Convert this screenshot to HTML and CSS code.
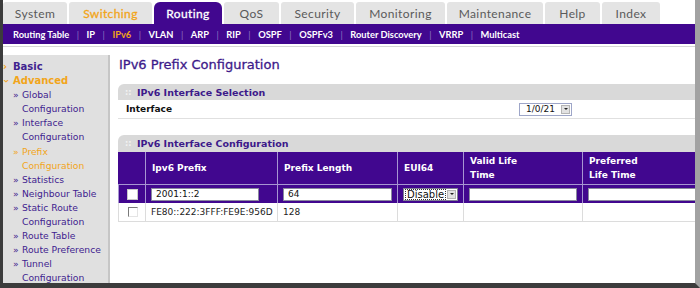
FILE: index.html
```html
<!DOCTYPE html>
<html>
<head>
<meta charset="utf-8">
<link rel="stylesheet" href="styles.css">
</head>
<body>
<div class="frame">
  <div class="tabs">
    <div class="tab">System</div>
    <div class="tab tab-warm">Switching</div>
    <div class="tab tab-on">Routing</div>
    <div class="tab">QoS</div>
    <div class="tab">Security</div>
    <div class="tab">Monitoring</div>
    <div class="tab">Maintenance</div>
    <div class="tab">Help</div>
    <div class="tab">Index</div>
  </div>
  <div class="subnav">
    <span>Routing Table</span><span class="sep">|</span>
    <span>IP</span><span class="sep">|</span>
    <span class="sub-on">IPv6</span><span class="sep">|</span>
    <span>VLAN</span><span class="sep">|</span>
    <span>ARP</span><span class="sep">|</span>
    <span>RIP</span><span class="sep">|</span>
    <span>OSPF</span><span class="sep">|</span>
    <span>OSPFv3</span><span class="sep">|</span>
    <span>Router Discovery</span><span class="sep">|</span>
    <span>VRRP</span><span class="sep">|</span>
    <span>Multicast</span>
  </div>
  <div class="rule"></div>
  <div class="body">
    <aside class="side">
      <div class="cat"><span class="arrow">›</span>Basic</div>
      <div class="cat cat-on"><span class="arrow arrow-down">›</span>Advanced</div>
      <div class="item"><span class="bullet">»</span>Global Configuration</div>
      <div class="item"><span class="bullet">»</span>Interface Configuration</div>
      <div class="item item-on"><span class="bullet">»</span>Prefix Configuration</div>
      <div class="item"><span class="bullet">»</span>Statistics</div>
      <div class="item"><span class="bullet">»</span>Neighbour Table</div>
      <div class="item"><span class="bullet">»</span>Static Route Configuration</div>
      <div class="item"><span class="bullet">»</span>Route Table</div>
      <div class="item"><span class="bullet">»</span>Route Preference</div>
      <div class="item"><span class="bullet">»</span>Tunnel Configuration</div>
    </aside>
    <main class="main">
      <h1 class="title">IPv6 Prefix Configuration</h1>

      <section class="sec">
        <div class="sec-head"><span class="grip">::</span>IPv6 Interface Selection</div>
        <div class="sel-row">
          <div class="sel-label">Interface</div>
          <div class="sel-value">
            <span class="select select-if"><span class="select-text">1/0/21</span><span class="select-btn"><span class="tri"></span></span></span>
          </div>
        </div>
      </section>

      <section class="sec sec-gap">
        <div class="sec-head"><span class="grip">::</span>IPv6 Interface Configuration</div>
        <div class="grid">
          <div class="hc hc-first"></div>
          <div class="hc">Ipv6 Prefix</div>
          <div class="hc">Prefix Length</div>
          <div class="hc">EUI64</div>
          <div class="hc">Valid Life<br>Time</div>
          <div class="hc">Preferred<br>Life Time</div>

          <div class="ec ec-first"><span class="box box-edit"></span></div>
          <div class="ec"><span class="field field-w1">2001:1::2</span></div>
          <div class="ec"><span class="field field-w2">64</span></div>
          <div class="ec"><span class="select select-eui"><span class="select-text select-focus">Disable</span><span class="select-btn"><span class="tri"></span></span></span></div>
          <div class="ec"><span class="field field-w1"></span></div>
          <div class="ec"><span class="field field-w3"></span></div>

          <div class="dc dc-first"><span class="box box-row"></span></div>
          <div class="dc">FE80::222:3FFF:FE9E:956D</div>
          <div class="dc">128</div>
          <div class="dc"></div>
          <div class="dc"></div>
          <div class="dc"></div>
        </div>
      </section>
    </main>
  </div>
</div>
</body>
</html>
```

FILE: styles.css
```css
html, body {
  margin: 0;
  padding: 0;
  background: #ffffff;
}

.frame {
  width: 700px;
  height: 288px;
  box-sizing: border-box;
  border-left: 3px solid #3c3c3c;
  border-right: 5px solid #a2a2a2;
  border-bottom: 5px solid #3c3c3c;
  overflow: hidden;
  background: #ffffff;
  font-family: "DejaVu Sans", Verdana, sans-serif;
}

/* top tabs */
.tabs {
  display: grid;
  grid-template-columns: 64px 83px 68px 55px 73px 89px 96px 55px 58px;
  column-gap: 2px;
  height: 22px;
  padding-top: 2px;
  font-family: Lato, "Open Sans", sans-serif;
  font-size: 12px;
}

.tab {
  display: flex;
  align-items: center;
  justify-content: center;
  background: #e4e4e4;
  color: #5a5a5a;
  border-radius: 3px 3px 0 0;
  letter-spacing: 0.4px;
}

.tab-warm {
  color: #f2a51a;
  -webkit-text-stroke: 0.3px #f2a51a;
}

.tab-on {
  background: #41078f;
  color: #ffffff;
  border-radius: 6px 6px 0 0;
  -webkit-text-stroke: 0.3px #ffffff;
}

/* sub navigation */
.subnav {
  height: 20px;
  background: #41078f;
  display: flex;
  align-items: center;
  padding-left: 10px;
  font-family: Lato, "Open Sans", sans-serif;
  font-weight: bold;
  font-size: 9.3px;
  color: #ffffff;
  white-space: nowrap;
}

.sep {
  color: #8d77c2;
  font-weight: normal;
  padding: 0 7.5px;
}

.sub-on {
  color: #f2a51a;
}

.rule {
  height: 1px;
  margin-top: 2px;
  background: #d6d6d6;
}

/* body */
.body {
  display: flex;
  margin-top: 8px;
  height: 228px;
}

.side {
  flex: none;
  width: 105px;
  background: #e0e0e0;
  border-right: 2px solid #c6c6c6;
  padding-top: 5px;
  font-size: 9.2px;
  line-height: 14.1px;
  color: #40238f;
}

.cat {
  font-weight: bold;
  font-size: 10px;
  padding-left: 10px;
  position: relative;
}

.cat-on {
  color: #f2a51a;
}

.arrow {
  position: absolute;
  left: 0;
  top: 0;
  color: #f2a51a;
  font-weight: bold;
}

.arrow-down {
  transform: rotate(90deg);
  left: 1px;
}

.item {
  padding-left: 19px;
  text-indent: -9px;
}

.bullet {
  display: inline-block;
  width: 9px;
  text-indent: 0;
}

.item-on {
  color: #f2a51a;
}

.main {
  flex: none;
  width: 620px;
  padding-left: 8px;
}

.title {
  margin: 2px 0 11px 1px;
  font-size: 13px;
  line-height: 16px;
  font-weight: normal;
  color: #3d1a8a;
  -webkit-text-stroke: 0.3px #3d1a8a;
}

.sec-gap {
  margin-top: 16px;
}

.sec-head {
  height: 16px;
  display: flex;
  align-items: center;
  background: #d9d9d9;
  border-radius: 6px 0 0 0;
  padding-left: 7px;
  font-weight: bold;
  font-size: 9.5px;
  color: #3d1a8a;
}

.sec-gap .sec-head {
  height: 17px;
}

.grip {
  color: #f2f2f2;
  width: 12px;
  font-size: 8px;
}

.sel-row {
  display: grid;
  grid-template-columns: 393px 1fr;
  height: 18px;
  align-items: center;
  border-bottom: 1px solid #e0e0e0;
}

.sel-label {
  padding-left: 8px;
  font-weight: bold;
  font-size: 9px;
  color: #111111;
}

.sel-value {
  padding-left: 8px;
  display: flex;
}

/* select widgets */
.select {
  display: inline-flex;
  align-items: center;
  box-sizing: border-box;
  height: 13px;
  background: #ffffff;
  border: 1px solid #9ea6c8;
  font-size: 9px;
  color: #111111;
}

.select-if {
  width: 53px;
}

.select-eui {
  width: 55px;
  border-color: #7f8092;
  font-size: 10px;
}

.select-text {
  padding-left: 6px;
  line-height: 11px;
}

.select-eui .select-text {
  padding-left: 2px;
}

.select-focus {
  outline: 1px dotted #333;
  outline-offset: -1px;
  padding: 0 2px;
  margin-left: 1px;
}

.select-btn {
  margin-left: auto;
  margin-right: 1px;
  width: 9px;
  height: 9px;
  box-sizing: border-box;
  background: #e2e2e2;
  border: 1px solid #b4b4b4;
  display: flex;
  align-items: center;
  justify-content: center;
}

.tri {
  width: 0;
  height: 0;
  border-left: 2px solid transparent;
  border-right: 2px solid transparent;
  border-top: 2px solid #222;
}

/* config table */
.grid {
  display: grid;
  grid-template-columns: 27px 132px 120px 66px 119px 160px;
}

.hc {
  height: 33px;
  box-sizing: border-box;
  background: #41078f;
  border-left: 1px solid #a796d2;
  border-bottom: 1px solid #a796d2;
  color: #ffffff;
  font-weight: bold;
  font-size: 9px;
  line-height: 14px;
  padding-left: 6px;
  display: flex;
  align-items: center;
}

.hc-first,
.ec-first,
.dc-first {
  border-left: none;
}

.ec {
  height: 18px;
  box-sizing: border-box;
  background: #41078f;
  border-left: 1px solid #a796d2;
  padding-left: 5px;
  display: flex;
  align-items: center;
}

.ec-first {
  padding-left: 8px;
}

.dc {
  height: 19px;
  box-sizing: border-box;
  border-left: 1px solid #dcdcdc;
  border-bottom: 1px solid #dcdcdc;
  padding-left: 5px;
  display: flex;
  align-items: center;
  font-size: 9px;
  color: #222222;
  white-space: nowrap;
}

.dc-first {
  padding-left: 9px;
}

.field {
  display: block;
  box-sizing: border-box;
  height: 13px;
  background: #ffffff;
  border: 1px solid #8a8a9e;
  font-size: 9px;
  line-height: 11px;
  padding-left: 4px;
  color: #111111;
}

.field-w1 {
  width: 108px;
}

.field-w2 {
  width: 109px;
}

.field-w3 {
  width: 140px;
}

.box {
  display: block;
  box-sizing: border-box;
  background: #ffffff;
}

.box-edit {
  width: 11px;
  height: 11px;
  border: 1px solid #c8c8c8;
}

.box-row {
  width: 10px;
  height: 10px;
  border-top: 1px solid #7a7a7a;
  border-left: 1px solid #7a7a7a;
  border-right: 1px solid #e4e4e4;
  border-bottom: 1px solid #e4e4e4;
}
```
